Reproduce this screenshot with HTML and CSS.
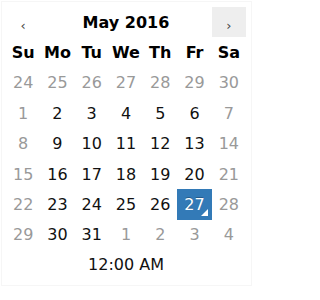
FILE: index.html
```html
<!DOCTYPE html>
<html>
<head>
<meta charset="utf-8">
<link rel="stylesheet" href="styles.css">
</head>
<body>
<div class="picker">
  <table class="days">
    <thead>
      <tr class="head">
        <th class="nav"><span>‹</span></th>
        <th class="title" colspan="5">May 2016</th>
        <th class="nav hover"><span>›</span></th>
      </tr>
      <tr class="dow">
        <th>Su</th><th>Mo</th><th>Tu</th><th>We</th><th>Th</th><th>Fr</th><th>Sa</th>
      </tr>
    </thead>
    <tbody>
      <tr><td class="old">24</td><td class="old">25</td><td class="old">26</td><td class="old">27</td><td class="old">28</td><td class="old">29</td><td class="old">30</td></tr>
      <tr><td class="old">1</td><td>2</td><td>3</td><td>4</td><td>5</td><td>6</td><td class="old">7</td></tr>
      <tr><td class="old">8</td><td>9</td><td>10</td><td>11</td><td>12</td><td>13</td><td class="old">14</td></tr>
      <tr><td class="old">15</td><td>16</td><td>17</td><td>18</td><td>19</td><td>20</td><td class="old">21</td></tr>
      <tr><td class="old">22</td><td>23</td><td>24</td><td>25</td><td>26</td><td class="active today">27</td><td class="old">28</td></tr>
      <tr><td class="old">29</td><td>30</td><td>31</td><td class="old">1</td><td class="old">2</td><td class="old">3</td><td class="old">4</td></tr>
    </tbody>
  </table>
  <div class="time">12:00 AM</div>
</div>
</body>
</html>
```
FILE: styles.css
```css
html, body {
  margin: 0;
  padding: 0;
  background: #fff;
}
body {
  font-family: "DejaVu Sans", Verdana, sans-serif;
  font-size: 16px;
  color: #111;
}
.picker {
  margin: 1px 0 0 1px;
  width: 240px;
  padding: 5px 5px 4px 4px;
  border: 1px solid #f6f6f6;
}
.days {
  width: 240px;
  border-collapse: collapse;
  table-layout: fixed;
}
.days th, .days td {
  padding: 0;
  height: 30.4px;
  text-align: center;
  vertical-align: middle;
}
.head .title {
  font-weight: bold;
  font-size: 16px;
  color: #000;
}
.nav {
  font-weight: normal;
  font-size: 13px;
  color: #444;
}
.nav span {
  position: relative;
  top: 3px;
}
.nav.hover {
  background: #eeeeee;
}
.dow th {
  font-weight: bold;
  color: #000;
}
.days td {
  color: #111;
}
.days td.old {
  color: #999;
}
.days td.active {
  background: #337ab7;
  color: #fff;
  text-shadow: 0 -1px 0 rgba(0,0,0,0.25);
  position: relative;
}
.days td.today::before {
  content: "";
  position: absolute;
  right: 4px;
  bottom: 4px;
  border-style: solid;
  border-color: transparent;
  border-width: 0 0 7px 7px;
  border-bottom-color: #fff;
}
.time {
  height: 30.4px;
  line-height: 30.4px;
  text-align: center;
  color: #111;
}
```
